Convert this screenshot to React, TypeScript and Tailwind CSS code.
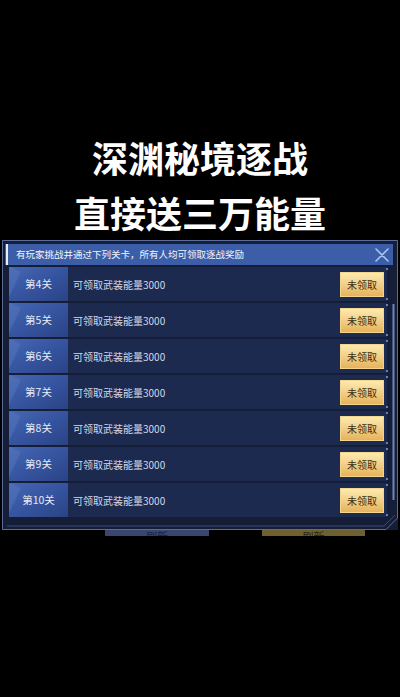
import React from "react";

const FONT = '"Noto Sans CJK SC", "Noto Sans", "Liberation Sans", sans-serif';

function Row({ n }: { n: number }) {
  return (
    <div className="relative flex h-[34px] w-[378px] items-center bg-[#1d2a4f]">
      <div className="relative flex h-full w-[59px] items-center justify-center overflow-hidden bg-gradient-to-br from-[#4667b2] via-[#3654a0] to-[#2a4384]">
        <div className="absolute -left-[10px] top-0 h-[40px] w-[14px] rotate-[25deg] bg-[#5a7cc4] opacity-40" />
        <span className="relative text-[10.5px] text-[#e6ebf7]">第{n}关</span>
      </div>
      <span className="ml-[5px] text-[10px] text-[#d3d9e8]">可领取武装能量3000</span>
      <div className="ml-auto mr-[3px] flex h-[25px] w-[44px] items-center justify-center border border-[#f3d58e] bg-gradient-to-b from-[#fdeab0] to-[#e6b35a] text-[10px] text-[#3b2c12]">
        未领取
      </div>
      <div className="absolute right-[-1px] top-[1px] h-[2px] w-[2px] bg-[#5f7fc6]" />
      <div className="absolute bottom-[1px] right-[-1px] h-[2px] w-[2px] bg-[#5f7fc6]" />
    </div>
  );
}

export default function App() {
  const rows = [4, 5, 6, 7, 8, 9, 10];
  return (
    <div className="h-[697px] w-[400px] overflow-hidden bg-black" style={{ fontFamily: FONT }}>
      <div className="flex flex-col items-center pt-[130px] text-[36px] font-bold leading-[55px] text-white">
        <div>深渊秘境逐战</div>
        <div>直接送三万能量</div>
      </div>
      <div className="relative z-10 mx-[2px] h-[290px] w-[396px] bg-[#151d37]">
        <svg className="absolute inset-0" width="396" height="290" viewBox="0 0 396 290">
          <path d="M0.5 0.5 H395.5 V278 L384 289.5 H0.5 Z" fill="none" stroke="#5a6c9a" strokeWidth="1" />
          <path d="M5 286 H382 L393 275" fill="none" stroke="#3a4a78" strokeWidth="1" />
          <rect x="390.5" y="64" width="2" height="196" fill="#6f86b8" />
        </svg>
        <div className="relative pl-[3px] pt-[4px]">
          <div className="relative flex h-[21px] w-[388px] items-center bg-[#3c5ea8]">
            <div className="absolute left-[1px] top-0 h-full w-[2px] bg-[#e9eefb]" />
            <span className="ml-[11px] text-[9.5px] text-[#f2f5fc]">有玩家挑战并通过下列关卡，所有人均可领取逐战奖励</span>
            <svg className="ml-auto mr-[4px]" width="14" height="14" viewBox="0 0 14 14">
              <path d="M1 1 L13 13 M13 1 L1 13" stroke="#a9c6f2" strokeWidth="1.6" strokeLinecap="round" />
            </svg>
          </div>
        </div>
        <div className="relative flex flex-col gap-[2px] pl-[7px] pt-[2px]">
          {rows.map((n) => (
            <Row key={n} n={n} />
          ))}
        </div>
      </div>
      <div className="-mt-[4px] flex h-[10px] overflow-hidden">
        <div className="ml-[105px] flex h-[10px] w-[104px] items-end justify-center bg-[#3a4670] text-[11px] leading-[10px] text-[#1a2040]">
          <span className="translate-y-[5px]">刷新</span>
        </div>
        <div className="ml-[53px] flex h-[10px] w-[103px] items-end justify-center bg-[#6e6033] text-[11px] leading-[10px] text-[#2a2410]">
          <span className="translate-y-[5px]">刷新</span>
        </div>
      </div>
    </div>
  );
}
